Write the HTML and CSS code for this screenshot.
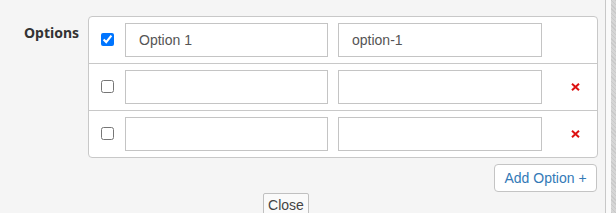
FILE: index.html
```html
<!DOCTYPE html>
<html lang="en">
<head>
    <meta charset="UTF-8">
    <title>Options</title>
    <link rel="stylesheet" href="styles.css">
</head>
<body>
    <div class="frame">
        <div class="dialog">
            <div class="field">
                <label class="fieldLabel">Options</label>
                <div class="fieldBody">
                    <div class="optionList">
                        <div class="optionRow">
                            <input type="checkbox" class="optCheck" checked>
                            <input type="text" class="optInput" value="Option 1">
                            <input type="text" class="optInput" value="option-1">
                            <span class="optDelete"></span>
                        </div>
                        <div class="optionRow">
                            <input type="checkbox" class="optCheck">
                            <input type="text" class="optInput">
                            <input type="text" class="optInput">
                            <span class="optDelete">
                                <svg width="9" height="8" viewBox="0 0 9 8"><path d="M1 0.8 L8 7.2 M8 0.8 L1 7.2" stroke="#d11" stroke-width="2"/></svg>
                            </span>
                        </div>
                        <div class="optionRow">
                            <input type="checkbox" class="optCheck">
                            <input type="text" class="optInput">
                            <input type="text" class="optInput">
                            <span class="optDelete">
                                <svg width="9" height="8" viewBox="0 0 9 8"><path d="M1 0.8 L8 7.2 M8 0.8 L1 7.2" stroke="#d11" stroke-width="2"/></svg>
                            </span>
                        </div>
                    </div>
                    <div class="addRow">
                        <button type="button" class="btnAdd">Add Option +</button>
                    </div>
                </div>
            </div>
            <button type="button" class="btnClose">Close</button>
        </div>
        <div class="gutter"></div>
        <div class="backdrop"></div>
    </div>
</body>
</html>
```

FILE: styles.css
```css
* {
    box-sizing: border-box;
    margin: 0;
    padding: 0;
}

body {
    background-color: #f5f5f5;
    font-family: "Liberation Sans", Arial, sans-serif;
    color: #333;
    height: 213px;
    overflow: hidden;
}

.frame {
    display: flex;
    height: 213px;
}

.dialog {
    width: 606px;
    flex: none;
    border-right: 1px solid #c8c8c8;
    background-color: #f5f5f5;
    padding-top: 16px;
}

.gutter {
    width: 5px;
    background-color: #fafafa;
}

.backdrop {
    flex: 1;
    background-color: #d2d2d2;
    background-image: repeating-linear-gradient(45deg, #cacaca 0 1px, #d6d6d6 1px 3px);
}

.field {
    display: flex;
}

.fieldLabel {
    width: 88px;
    padding-left: 24px;
    padding-top: 7px;
    font-family: "Noto Sans", Arial, sans-serif;
    font-size: 14px;
    font-weight: bold;
    color: #333;
}

.fieldBody {
    width: 510px;
}

.optionList {
    background-color: #fff;
    border: 1px solid #c8c8c8;
    border-radius: 4px;
}

.optionRow {
    display: flex;
    align-items: center;
    height: 46px;
    padding-left: 12px;
}

.optionRow + .optionRow {
    border-top: 1px solid #c8c8c8;
    height: 47px;
}

.optCheck {
    width: 13px;
    height: 13px;
    margin: 0 11px 2px 0;
    flex: none;
}

.optInput {
    width: 203px;
    height: 34px;
    border: 1px solid #c4c4c4;
    padding-left: 13px;
    font-family: inherit;
    font-size: 14px;
    color: #555;
    background-color: #fff;
    outline: none;
}

.optInput + .optInput {
    width: 204px;
    margin-left: 10px;
}

.optDelete {
    display: flex;
    align-items: center;
    padding-left: 29px;
}

.addRow {
    display: flex;
    justify-content: flex-end;
    padding-top: 6px;
    padding-right: 1px;
}

.btnAdd {
    width: 103px;
    height: 28px;
    background-color: #fff;
    border: 1px solid #c4c4c4;
    border-radius: 4px;
    color: #337ab7;
    font-family: inherit;
    font-size: 14px;
}

.btnClose {
    display: block;
    margin: 1px 0 0 263px;
    height: 24px;
    width: 46px;
    background-color: #fafafa;
    border: 1px solid #c0c0c0;
    border-radius: 2px;
    font-family: inherit;
    font-size: 14px;
    color: #444;
}
```
